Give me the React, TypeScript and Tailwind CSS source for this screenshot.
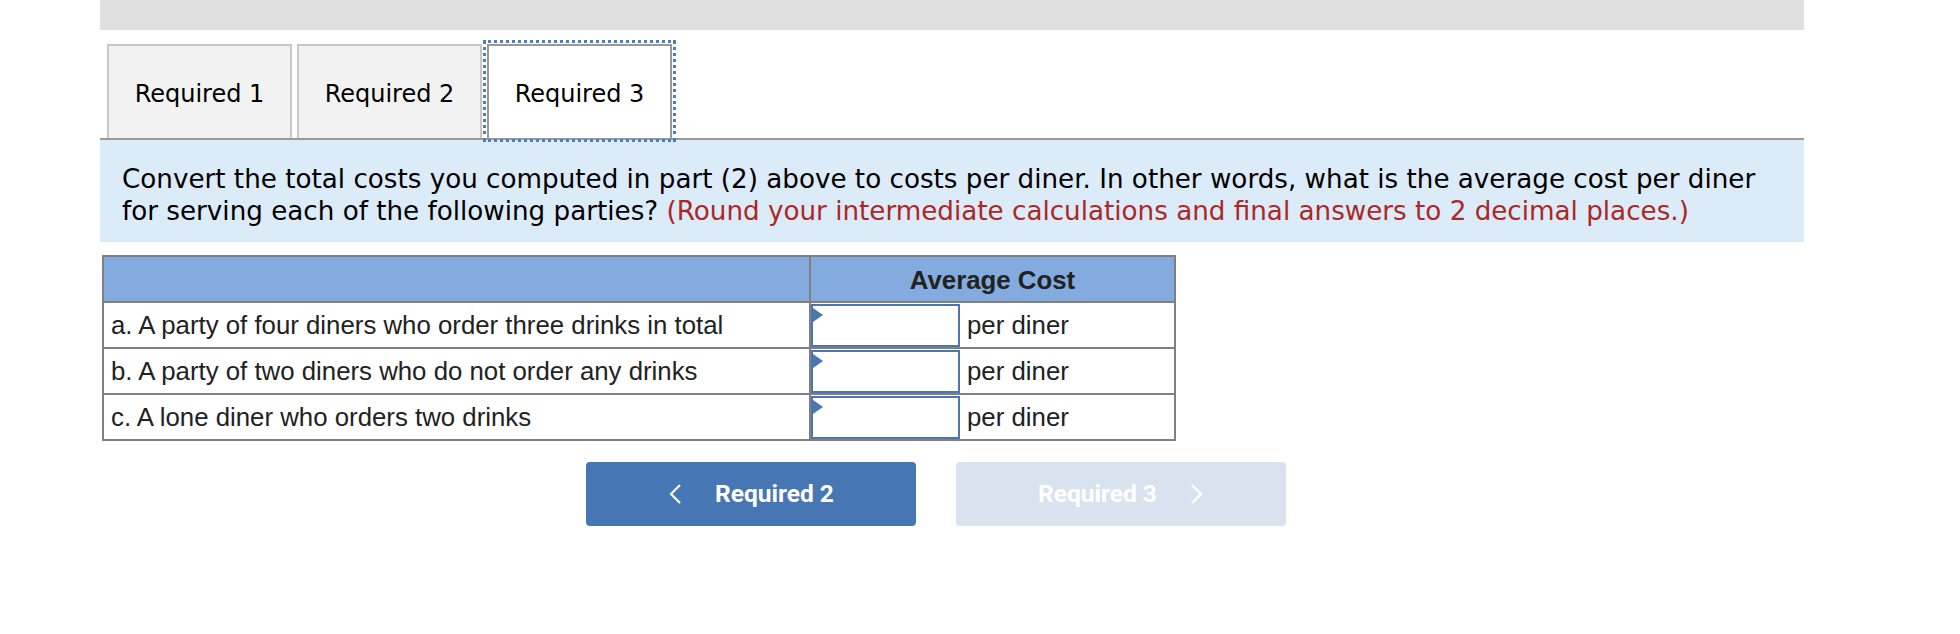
const rows = [
  "a. A party of four diners who order three drinks in total",
  "b. A party of two diners who do not order any drinks",
  "c. A lone diner who orders two drinks",
];

const verdana = { fontFamily: '"DejaVu Sans", Verdana, sans-serif' };
const arial = { fontFamily: '"Liberation Sans", Arial, sans-serif' };
const roboto = { fontFamily: 'Roboto, "Liberation Sans", sans-serif' };

function Flag() {
  return (
    <svg className="absolute left-0 top-[2px]" width="11" height="15" viewBox="0 0 11 15">
      <polygon points="0,0 10,7 0,14" fill="#4a76b4" />
    </svg>
  );
}

function Chevron({ dir, color }: { dir: "left" | "right"; color: string }) {
  return (
    <svg width="14" height="22" viewBox="0 0 14 22">
      <polyline
        points={dir === "left" ? "12,2 3,11 12,20" : "2,2 11,11 2,20"}
        fill="none"
        stroke={color}
        strokeWidth="2.2"
      />
    </svg>
  );
}

export default function App() {
  return (
    <div className="min-h-[634px] bg-white">
      <div className="ml-[100px] w-[1704px]">
        <div className="h-[30px] bg-[#e0e0e0]" />

        <div className="mt-[14px] flex border-b-2 border-[#999999] pl-[7px]" style={verdana}>
          <div className="flex h-[94px] w-[185px] items-center justify-center border-2 border-b-0 border-[#c8c8c8] bg-[#f2f2f2] pt-[4px] text-[24px] text-black">
            Required 1
          </div>
          <div className="ml-[5px] flex h-[94px] w-[185px] items-center justify-center border-2 border-b-0 border-[#c8c8c8] bg-[#f2f2f2] pt-[4px] text-[24px] text-black">
            Required 2
          </div>
          <div className="ml-[5px] flex h-[94px] w-[185px] items-center justify-center border-2 border-b-0 border-[#999999] bg-white pt-[4px] text-[24px] text-black outline-[3px] outline-offset-[1px] outline-dotted outline-[#4a7ec0]">
            Required 3
          </div>
        </div>

        <div className="bg-[#dcebf8] pb-[15px] pl-[22px] pt-[24px]" style={verdana}>
          <p className="text-[26.2px] leading-[31.5px] text-black">
            Convert the total costs you computed in part (2) above to costs per diner. In other words, what is the average cost per diner
            <br />
            for serving each of the following parties?{" "}
            <span className="text-[#aa2826]">(Round your intermediate calculations and final answers to 2 decimal places.)</span>
          </p>
        </div>

        <table className="ml-[2px] mt-[13px] border-collapse" style={arial}>
          <colgroup>
            <col className="w-[707px]" />
            <col className="w-[150px]" />
            <col className="w-[215px]" />
          </colgroup>
          <thead>
            <tr className="bg-[#83abdf]">
              <th className="h-[46px] border-2 border-[#808080]" />
              <th colSpan={2} className="h-[46px] border-2 border-[#808080] pt-[2px] text-center text-[25.8px] font-bold text-[#222222]">
                Average Cost
              </th>
            </tr>
          </thead>
          <tbody>
            {rows.map((label) => (
              <tr key={label}>
                <td className="h-[46px] border-2 border-[#808080] pl-[7px] text-[25.8px] text-[#222222]">{label}</td>
                <td className="h-[46px] border-y-2 border-l-2 border-[#808080] p-0">
                  <div className="relative h-[43px] w-full border-2 border-[#4a76b4] bg-white">
                    <Flag />
                  </div>
                </td>
                <td className="h-[46px] border-y-2 border-r-2 border-[#808080] pl-[7px] text-[25.8px] text-[#222222]">per diner</td>
              </tr>
            ))}
          </tbody>
        </table>

        <div className="ml-[486px] mt-[21px] flex gap-[40px]" style={roboto}>
          <div className="flex h-[64px] w-[330px] items-center justify-center gap-[33px] rounded-[4px] bg-[#4676b4] text-[24.5px] font-bold text-white">
            <Chevron dir="left" color="#ffffff" />
            <span>Required 2</span>
          </div>
          <div className="flex h-[64px] w-[330px] items-center justify-center gap-[33px] rounded-[4px] bg-[#d9e3ef] text-[24.5px] font-bold text-white">
            <span>Required 3</span>
            <Chevron dir="right" color="#ffffff" />
          </div>
        </div>
      </div>
    </div>
  );
}
